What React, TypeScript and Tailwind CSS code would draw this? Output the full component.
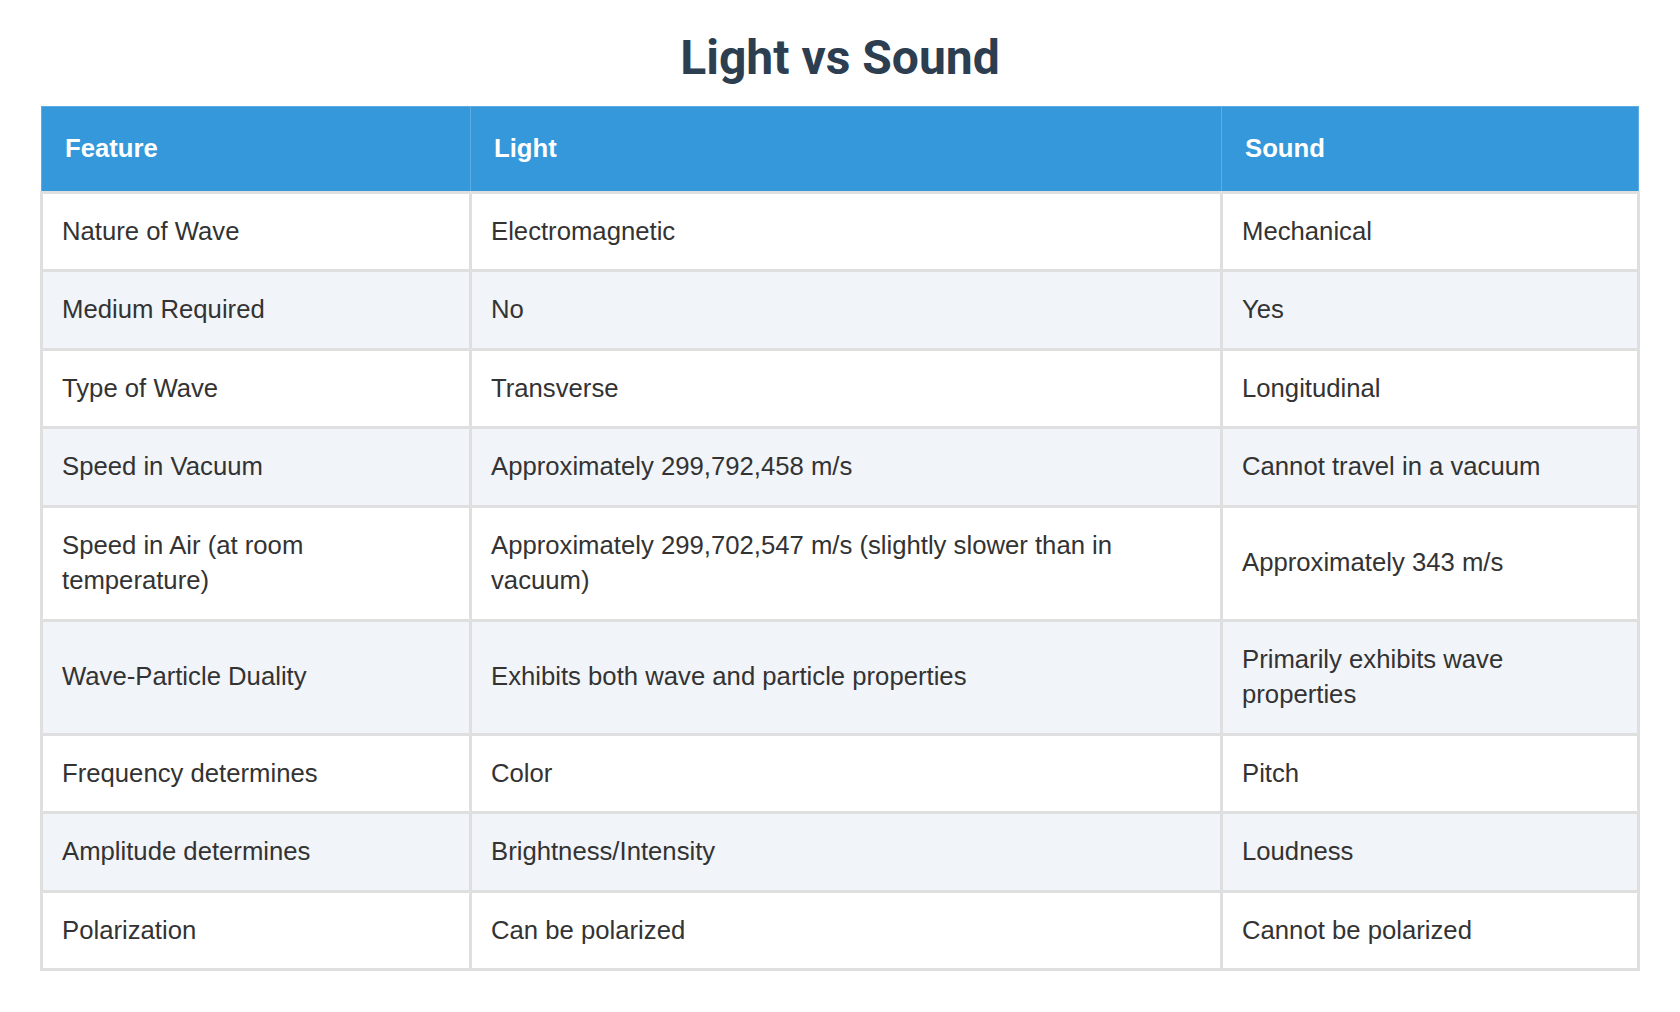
import React from 'react';

const rows = [
  { feature: 'Nature of Wave', light: 'Electromagnetic', sound: 'Mechanical' },
  { feature: 'Medium Required', light: 'No', sound: 'Yes' },
  { feature: 'Type of Wave', light: 'Transverse', sound: 'Longitudinal' },
  { feature: 'Speed in Vacuum', light: 'Approximately 299,792,458 m/s', sound: 'Cannot travel in a vacuum' },
  {
    feature: 'Speed in Air (at room temperature)',
    light: 'Approximately 299,702,547 m/s (slightly slower than in vacuum)',
    sound: 'Approximately 343 m/s',
  },
  { feature: 'Wave-Particle Duality', light: 'Exhibits both wave and particle properties', sound: 'Primarily exhibits wave properties' },
  { feature: 'Frequency determines', light: 'Color', sound: 'Pitch' },
  { feature: 'Amplitude determines', light: 'Brightness/Intensity', sound: 'Loudness' },
  { feature: 'Polarization', light: 'Can be polarized', sound: 'Cannot be polarized' },
];

const cell = 'border-[3px] border-[#dfdfdf] px-[19px] py-[20px] align-middle';

export default function App() {
  return (
    <div className="min-h-screen bg-white px-[40px] pt-[30px] pb-[40px] font-['Liberation_Sans',Arial,sans-serif] text-[#333333]">
      <h1 className="mb-[20px] text-center font-['Roboto',sans-serif] text-[48px] font-bold leading-[56px] text-[#2c3e50]">
        Light vs Sound
      </h1>

      <table className="w-[1600px] table-fixed border-collapse text-left text-[25.7px] leading-[35.5px]">
        <colgroup>
          <col className="w-[429px]" />
          <col className="w-[751px]" />
          <col />
        </colgroup>
        <thead>
          <tr className="bg-[#3498db] text-white">
            <th className="border border-[#5dade2] px-[23px] py-[24px] font-bold">Feature</th>
            <th className="border border-[#5dade2] px-[23px] py-[24px] font-bold">Light</th>
            <th className="border border-[#5dade2] px-[23px] py-[24px] font-bold">Sound</th>
          </tr>
        </thead>
        <tbody>
          {rows.map((r, i) => (
            <tr key={r.feature} className={i % 2 === 1 ? 'bg-[#f1f4f9]' : 'bg-white'}>
              <td className={cell}>{r.feature}</td>
              <td className={cell}>{r.light}</td>
              <td className={cell}>{r.sound}</td>
            </tr>
          ))}
        </tbody>
      </table>
    </div>
  );
}
